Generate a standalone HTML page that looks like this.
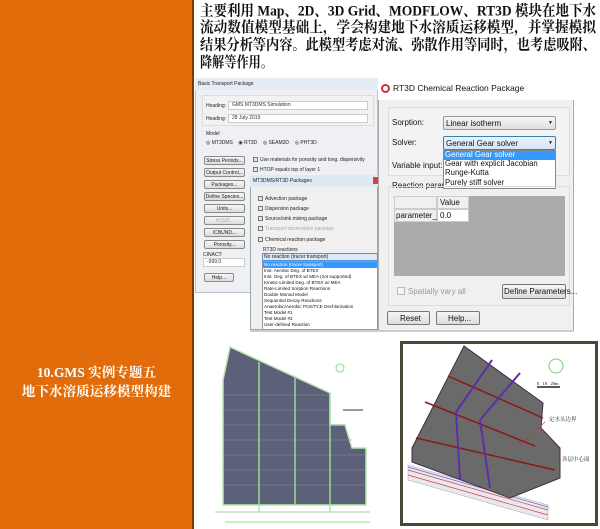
<!DOCTYPE html>
<html><head><meta charset="utf-8"><style>
*{margin:0;padding:0;box-sizing:border-box}
body{width:600px;height:529px;overflow:hidden;background:#fff;position:relative;font-family:"Liberation Sans",sans-serif}
.a{position:absolute}
.serif{font-family:"Liberation Serif","Noto Serif CJK SC",serif;font-weight:bold}
.btn{position:absolute;background:linear-gradient(#f6f6f6,#dcdcdc);border:1px solid #8a8a8a;border-radius:2px;font-size:5px;text-align:center;line-height:8px;color:#222}
.f{position:absolute;background:#fff;border:1px solid #ccc;font-size:5px;line-height:7px;padding-left:3px;color:#333}
.t5{position:absolute;font-size:5px;color:#222;white-space:nowrap}
.cb{display:inline-block;width:5px;height:5px;border:1px solid #777;background:#dde8f5;margin-right:2px;vertical-align:middle}
.t8{position:absolute;font-size:8px;color:#111;white-space:nowrap}
</style></head><body>
<div class="a" style="left:0;top:0;width:193px;height:529px;background:#e36c0a"></div>
<div class="a" style="left:192px;top:0;width:2px;height:529px;background:#7a3a06"></div>
<div class="a serif" style="left:0;top:363px;width:193px;text-align:center;color:#fff;font-size:13.6px;line-height:19px">10.GMS 实例专题五<br>地下水溶质运移模型构建</div>
<svg class="a" style="left:0;top:0" width="600" height="78">
<g font-family="Liberation Serif, Noto Serif CJK SC, serif" font-weight="bold" font-size="15" fill="#111">
<text x="200" y="15.5" textLength="396" lengthAdjust="spacingAndGlyphs">主要利用 Map、2D、3D Grid、MODFLOW、RT3D 模块在地下水</text>
<text x="200" y="32" textLength="396" lengthAdjust="spacingAndGlyphs">流动数值模型基础上，学会构建地下水溶质运移模型，并掌握模拟</text>
<text x="200" y="49.5" textLength="396" lengthAdjust="spacingAndGlyphs">结果分析等内容。此模型考虑对流、弥散作用等同时，也考虑吸附、</text>
<text x="200" y="67" textLength="73" lengthAdjust="spacingAndGlyphs">降解等作用。</text>
</g></svg>

<!-- Basic transport dialog -->
<div class="a" style="left:195px;top:78px;width:183px;height:215px;background:#eef0f3;border:1px solid #b8c0cc"></div>
<div class="a" style="left:195px;top:78px;width:183px;height:12px;background:#e6ecf4"></div>
<div class="t5" style="left:198px;top:81px">Basic Transport Package</div>
<div class="a" style="left:202px;top:95px;width:172px;height:31px;background:#f2f2f2;border:1px solid #ddd"></div>
<div class="t5" style="left:206px;top:103px">Heading:</div><div class="f" style="left:228px;top:101px;width:140px;height:9px">GMS MT3DMS Simulation</div>
<div class="t5" style="left:206px;top:116px">Heading:</div><div class="f" style="left:228px;top:114px;width:140px;height:9px">28 July 2019</div>
<div class="t5" style="left:206px;top:131px">Model</div>
<div class="t5" style="left:206px;top:140px">◎ MT3DMS &nbsp;&nbsp; ◉ RT3D &nbsp;&nbsp; ◎ SEAM3D &nbsp;&nbsp; ◎ PHT3D</div>
<div class="btn" style="left:204px;top:156px;width:41px;height:9px">Stress Periods...</div>
<div class="btn" style="left:204px;top:168px;width:41px;height:9px">Output Control...</div>
<div class="btn" style="left:204px;top:180px;width:41px;height:9px">Packages...</div>
<div class="btn" style="left:204px;top:192px;width:41px;height:9px">Define Species...</div>
<div class="btn" style="left:204px;top:204px;width:41px;height:9px">Units...</div>
<div class="btn" style="left:204px;top:216px;width:41px;height:9px;color:#aaa">HTOP...</div>
<div class="btn" style="left:204px;top:228px;width:41px;height:9px">ICBUND...</div>
<div class="btn" style="left:204px;top:240px;width:41px;height:9px">Porosity...</div>
<div class="t5" style="left:203px;top:252px">CINACT:</div>
<div class="f" style="left:203px;top:258px;width:42px;height:9px">-999.0</div>
<div class="btn" style="left:204px;top:273px;width:30px;height:9px">Help...</div>
<div class="t5" style="left:253px;top:157px"><span class="cb"></span>Use materials for porosity and long. dispersivity</div>
<div class="t5" style="left:253px;top:167px"><span class="cb"></span>HTOP equals top of layer 1</div>

<!-- MT3DMS packages -->
<div class="a" style="left:250px;top:175px;width:128px;height:155px;background:#f0f0f0;border:1px solid #9aa"></div>
<div class="a" style="left:250px;top:175px;width:128px;height:12px;background:#dfe8f3"></div>
<div class="t5" style="left:253px;top:178px">MT3DMS/RT3D Packages</div>
<div class="a" style="left:373px;top:177px;width:5px;height:7px;background:#c44"></div>
<div class="t5" style="left:258px;top:196px"><span class="cb"></span>Advection package</div>
<div class="t5" style="left:258px;top:206px"><span class="cb"></span>Dispersion package</div>
<div class="t5" style="left:258px;top:216px"><span class="cb"></span>Source/sink mixing package</div>
<div class="t5" style="left:258px;top:226px;color:#aaa"><span class="cb" style="background:#eee"></span>Transport observation package</div>
<div class="t5" style="left:258px;top:237px"><span class="cb"></span>Chemical reaction package</div>
<div class="t5" style="left:263px;top:247px">RT3D reactions</div>
<div class="a" style="left:262px;top:253px;width:116px;height:8px;background:#dbe8f6;border:1px solid #5b8fd0"></div>
<div class="t5" style="left:264px;top:254px">No reaction (tracer transport)</div>
<div class="a" style="left:262px;top:261px;width:116px;height:69px;background:#fff;border:1px solid #999"></div>
<div class="a" style="left:263px;top:262px;width:114px;height:6px;background:#3399ff"></div>
<div class="a" style="left:264px;top:262px;font-size:4.6px;line-height:6px;color:#111;white-space:nowrap"><span style="color:#fff">No reaction (tracer transport)</span><br>Inst. Aerobic Deg. of BTEX<br>Inst. Deg. of BTEX w/ MEA (not supported)<br>Kinetic-Limited Deg. of BTEX w/ MEA<br>Rate-Limited Sorption Reactions<br>Double Monod Model<br>Sequential Decay Reactions<br>Anaerobic/Aerobic PCE/TCE Dechlorination<br>Test Model #1<br>Test Model #2<br>User-defined Reaction</div>

<!-- RT3D dialog -->
<div class="a" style="left:378px;top:78px;width:196px;height:254px;background:#f0f0f0;border:1px solid #aaa"></div>
<div class="a" style="left:378px;top:78px;width:196px;height:22px;background:#fff"></div>
<div class="a" style="left:381px;top:84px;width:9px;height:9px;border-radius:50%;border:2px solid #c33"></div>
<div class="t8" style="left:393px;top:83px;font-size:8.5px">RT3D Chemical Reaction Package</div>
<div class="a" style="left:388px;top:107px;width:182px;height:69px;border:1px solid #dcdcdc;background:#f3f3f3"></div>
<div class="t8" style="left:392px;top:118px">Sorption:</div>
<div class="a" style="left:443px;top:116px;width:113px;height:14px;background:linear-gradient(#f5f5f5,#e0e0e0);border:1px solid #999;border-radius:2px"></div>
<div class="t8" style="left:446px;top:119px">Linear isotherm</div><div class="t5" style="left:548px;top:120px">▼</div>
<div class="t8" style="left:392px;top:138px">Solver:</div>
<div class="a" style="left:443px;top:136px;width:113px;height:14px;background:linear-gradient(#eaf3fc,#d5e6f7);border:1px solid #3c7fb1;border-radius:2px"></div>
<div class="t8" style="left:446px;top:139px">General Gear solver</div><div class="t5" style="left:548px;top:140px">▼</div>
<div class="t8" style="left:392px;top:161px">Variable input:</div>
<div class="t8" style="left:392px;top:181px">Reaction paramet</div>
<div class="a" style="left:443px;top:150px;width:113px;height:39px;background:#fff;border:1px solid #888"></div>
<div class="a" style="left:444px;top:151px;width:111px;height:9px;background:#3399ff"></div>
<div class="a" style="left:445px;top:150px;font-size:7.8px;line-height:9.2px;color:#111;white-space:nowrap"><span style="color:#fff">General Gear solver</span><br>Gear with explicit Jacobian<br>Runge-Kutta<br>Purely stiff solver</div>
<div class="a" style="left:388px;top:186px;width:182px;height:120px;border:1px solid #dcdcdc"></div>
<div class="a" style="left:394px;top:196px;width:171px;height:80px;background:#ababab"></div>
<div class="a" style="left:394px;top:196px;width:43px;height:13px;background:#f0f0f0;border:1px solid #ccc"></div>
<div class="a" style="left:437px;top:196px;width:32px;height:13px;background:#f0f0f0;border:1px solid #ccc"></div>
<div class="t8" style="left:440px;top:198px">Value</div>
<div class="a" style="left:394px;top:209px;width:43px;height:13px;background:#f0f0f0;border:1px solid #ccc"></div>
<div class="t8" style="left:396px;top:211px">parameter_1</div>
<div class="a" style="left:437px;top:209px;width:32px;height:13px;background:#fff;border:1px solid #ccc"></div>
<div class="t8" style="left:440px;top:211px">0.0</div>
<div class="a" style="left:397px;top:287px;width:8px;height:8px;border:1px solid #bbb;background:#f6f6f6"></div>
<div class="t8" style="left:408px;top:287px;color:#999">Spatially vary all</div>
<div class="a" style="left:502px;top:284px;width:64px;height:15px;background:linear-gradient(#f6f6f6,#dcdcdc);border:1px solid #777;border-radius:2px"></div>
<div class="t8" style="left:504px;top:287px">Define Parameters...</div>
<div class="a" style="left:387px;top:311px;width:43px;height:14px;background:linear-gradient(#f6f6f6,#dcdcdc);border:1px solid #777;border-radius:2px"></div>
<div class="t8" style="left:400px;top:314px">Reset</div>
<div class="a" style="left:436px;top:311px;width:44px;height:14px;background:linear-gradient(#f6f6f6,#dcdcdc);border:1px solid #777;border-radius:2px"></div>
<div class="t8" style="left:448px;top:314px">Help...</div>
<div class="a" style="left:250px;top:330px;width:324px;height:2px;background:#ccc"></div>

<!-- bottom left drawing -->
<svg class="a" style="left:195px;top:338px" width="180" height="191" viewBox="195 338 180 191">
<polygon points="230,347 330,393 330,425 345,425 352,448 366,448 366,505 223,505 223,380" fill="#5c6078" stroke="#b8e8b0" stroke-width="1.5"/>
<g stroke="#8a8ea4" stroke-width="0.6">
<line x1="223" y1="395" x2="330" y2="395"/><line x1="223" y1="410" x2="330" y2="410"/><line x1="223" y1="425" x2="345" y2="425"/><line x1="223" y1="440" x2="352" y2="440"/><line x1="223" y1="455" x2="366" y2="455"/><line x1="223" y1="470" x2="366" y2="470"/><line x1="223" y1="485" x2="366" y2="485"/>
</g>
<g stroke="#a6e8a0" stroke-width="1.3"><line x1="259" y1="362" x2="259" y2="512"/><line x1="295" y1="376" x2="295" y2="505"/><line x1="330" y1="393" x2="330" y2="512"/></g>
<line x1="215" y1="512" x2="370" y2="512" stroke="#7c7" stroke-width="0.8"/>
<line x1="225" y1="522" x2="370" y2="522" stroke="#7c7" stroke-width="0.8"/>
<circle cx="340" cy="368" r="4" fill="none" stroke="#7c7" stroke-width="0.8"/>
<line x1="343" y1="410" x2="363" y2="410" stroke="#333" stroke-width="1"/>
</svg>

<!-- bottom right 3D -->
<div class="a" style="left:400px;top:341px;width:198px;height:185px;border:3px solid #4b4838;background:#fff"></div>
<svg class="a" style="left:403px;top:344px" width="192" height="179" viewBox="403 344 192 179">
<polygon points="408,465 548,505 548,520 408,480" fill="#e8e8ee" stroke="#9aa" stroke-width="0.5"/>
<g stroke="#c44" stroke-width="0.7"><line x1="408" y1="470" x2="548" y2="510"/><line x1="408" y1="475" x2="548" y2="515"/></g>
<line x1="408" y1="467" x2="548" y2="507" stroke="#66c" stroke-width="0.7"/>
<polygon points="412,448 464,346 543,403 541,428 560,448 560,478 510,498 412,462" fill="#6a6a6a" stroke="#4a2a4a" stroke-width="1"/>
<g stroke="#8a1a1a" stroke-width="1.5"><line x1="425" y1="402" x2="535" y2="446"/><line x1="416" y1="438" x2="555" y2="470"/><line x1="448" y1="376" x2="543" y2="418"/></g>
<g stroke="#5b2fa8" stroke-width="2"><line x1="456" y1="412" x2="492" y2="360"/><line x1="480" y1="420" x2="520" y2="373"/><line x1="460" y1="480" x2="456" y2="412"/><line x1="490" y1="488" x2="480" y2="420"/></g>
<circle cx="556" cy="366" r="7" fill="none" stroke="#7c7" stroke-width="1"/>
<line x1="537" y1="387" x2="560" y2="387" stroke="#222" stroke-width="1.5"/>
<text x="537" y="385" font-size="4.5" font-family="Liberation Serif">0 &#160; 10 &#160; 20m</text>
<text x="549" y="421" font-size="5.5" fill="#222" font-family="Noto Serif CJK SC,serif">定水头边界</text>
<text x="562" y="461" font-size="5.5" fill="#222" font-family="Noto Serif CJK SC,serif">各层中心面</text>
<line x1="545" y1="422" x2="520" y2="445" stroke="#c33" stroke-width="0.6"/>
</svg>
</body></html>
